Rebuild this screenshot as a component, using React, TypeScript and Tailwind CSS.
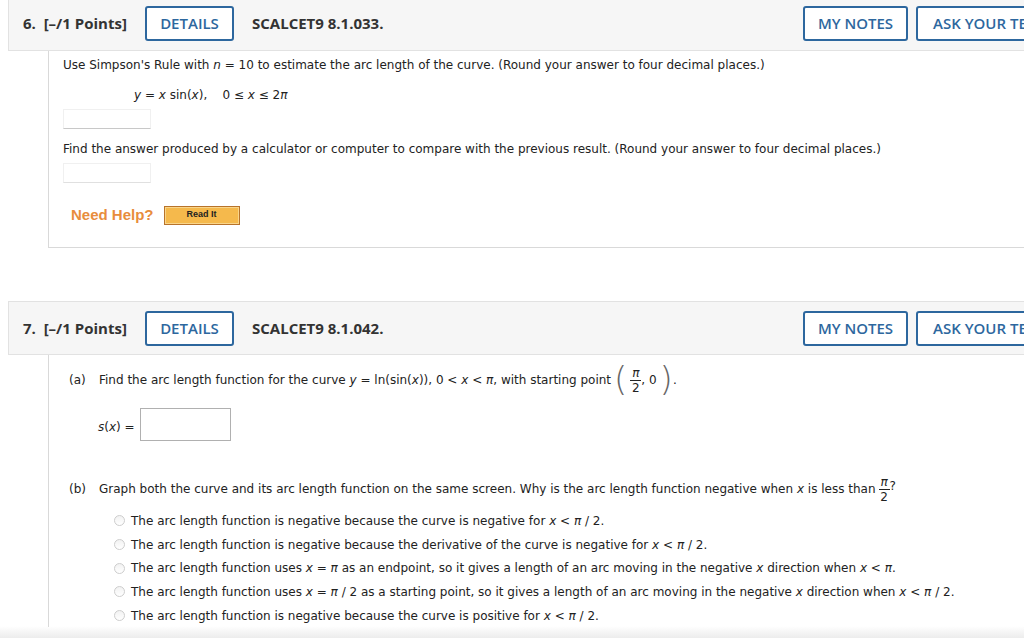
import React from "react";

const body = "font-['DejaVu_Sans','Verdana',sans-serif] text-[12px] text-[#222]";
const head = "font-['Open_Sans',sans-serif]";

const I = ({ children }: { children: React.ReactNode }) => <i className="italic">{children}</i>;

const Frac = ({ num, den }: { num: string; den: string }) => (
  <span className="inline-flex flex-col items-center align-middle mx-[3px] leading-none">
    <span className="italic text-[12px] pb-[1px]">{num}</span>
    <span className="border-t border-[#222] w-[11px]" />
    <span className="text-[12px] pt-[1px]">{den}</span>
  </span>
);

const Header = ({ num, code, className }: { num: string; code: string; className?: string }) => (
  <div className={`flex items-center h-[54px] bg-[#f6f6f6] border border-[#e2e2e2] border-r-0 pl-[14px] overflow-hidden ${head} ${className ?? ""}`}>
    <span className="text-[15px] font-bold text-[#333] w-[122px] whitespace-nowrap">
      {num}.&nbsp; [–/1 Points]
    </span>
    <button className="h-[35px] w-[89px] shrink-0 rounded-[3px] border-2 border-[#2d679e] text-[#2d679e] text-[15px] font-semibold bg-white">
      DETAILS
    </button>
    <span className="ml-[18px] text-[15px] font-bold text-[#333]">{code}</span>
    <div className="ml-auto flex gap-[8px] -mr-[42px]">
      <button className="h-[35px] w-[105px] shrink-0 rounded-[3px] border-2 border-[#2d679e] text-[#2d679e] text-[15px] font-semibold bg-white">
        MY NOTES
      </button>
      <button className="h-[35px] w-[150px] shrink-0 rounded-[3px] border-2 border-[#2d679e] text-[#2d679e] text-[15px] font-semibold bg-white text-left pl-[15px] whitespace-nowrap">
        ASK YOUR TE
      </button>
    </div>
  </div>
);

const Radio = ({ children }: { children: React.ReactNode }) => (
  <div className="flex items-center h-[23.7px]">
    <span className="w-[11px] h-[11px] rounded-full border border-[#cdcdcd] bg-gradient-to-b from-[#f2f2f2] to-white mr-[6px] shrink-0" />
    <span>{children}</span>
  </div>
);

export default function App() {
  return (
    <div className="relative w-[1024px] h-[638px] overflow-hidden bg-white">
      {/* Question 6 */}
      <div className="ml-[8px] -mt-[3px]">
        <Header num="6" code="SCALCET9 8.1.033." className="border-t-0" />
        <div className={`ml-[40px] border-l border-b border-[#d9d9d9] pl-[14px] pt-[6px] pb-[22px] ${body}`}>
          <p className="leading-[16px]">
            Use Simpson's Rule with <I>n</I> = 10 to estimate the arc length of the curve. (Round your answer to four decimal places.)
          </p>
          <p className="mt-[14px] ml-[71px] leading-[16px]">
            <I>y</I> = <I>x</I> sin(<I>x</I>),&nbsp;&nbsp;&nbsp; 0 ≤ <I>x</I> ≤ 2<I>π</I>
          </p>
          <div className="mt-[6px] w-[88px] h-[20px] border border-[#f0f0f0] border-b-[#c8c8c8]" />
          <p className="mt-[12px] leading-[16px]">
            Find the answer produced by a calculator or computer to compare with the previous result. (Round your answer to four decimal places.)
          </p>
          <div className="mt-[6px] w-[88px] h-[20px] border border-[#f0f0f0] border-b-[#e0e0e0]" />
          <div className="mt-[22px] ml-[8px] flex items-center h-[20px]">
            <span className="font-['Liberation_Sans',Arial,sans-serif] font-bold text-[15px] text-[#e88d3c]">Need Help?</span>
            <button className="ml-[10px] w-[76px] h-[19px] border border-[#b8732a] bg-[#f5b94c] font-['Liberation_Sans',Arial,sans-serif] font-bold text-[9px] text-[#222] shadow-[inset_0_0_0_1px_#f9d58a]">
              Read It
            </button>
          </div>
        </div>
      </div>

      {/* Question 7 */}
      <div className="ml-[8px] mt-[53px]">
        <Header num="7" code="SCALCET9 8.1.042." />
        <div className={`ml-[40px] border-l border-[#d9d9d9] pl-[20px] pt-[12px] ${body}`}>
          <div className="flex items-center h-[26px]">
            <span className="w-[30px]">(a)</span>
            <span>
              Find the arc length function for the curve <I>y</I> = ln(sin(<I>x</I>)), 0 &lt; <I>x</I> &lt; <I>π</I>, with starting point
            </span>
            <span className="ml-[3px] inline-flex items-center">
              <span className="text-[34px] font-thin text-[#666] leading-none -mt-[3px]">(</span>
              <Frac num="π" den="2" />
              <span className="-ml-[3px]">, 0</span>
              <span className="text-[34px] font-thin text-[#666] leading-none -mt-[3px] ml-[3px]">)</span>
              <span>.</span>
            </span>
          </div>
          <div className="flex items-center mt-[15px] ml-[29px]">
            <span className="mr-[5px] pt-[4px]">
              <I>s</I>(<I>x</I>) =
            </span>
            <div className="w-[91px] h-[33px] border border-[#b0b0b0]" />
          </div>
          <div className="flex items-center mt-[33px] h-[30px]">
            <span className="w-[30px]">(b)</span>
            <span>
              Graph both the curve and its arc length function on the same screen. Why is the arc length function negative when <I>x</I> is less than
            </span>
            <Frac num="π" den="2" />
            <span className="-ml-[3px] -mt-[6px]">?</span>
          </div>
          <div className="mt-[5px] ml-[45px]">
            <Radio>
              The arc length function is negative because the curve is negative for <I>x</I> &lt; <I>π</I> / 2.
            </Radio>
            <Radio>
              The arc length function is negative because the derivative of the curve is negative for <I>x</I> &lt; <I>π</I> / 2.
            </Radio>
            <Radio>
              The arc length function uses <I>x</I> = <I>π</I> as an endpoint, so it gives a length of an arc moving in the negative <I>x</I> direction when <I>x</I> &lt; <I>π</I>.
            </Radio>
            <Radio>
              The arc length function uses <I>x</I> = <I>π</I> / 2 as a starting point, so it gives a length of an arc moving in the negative <I>x</I> direction when <I>x</I> &lt; <I>π</I> / 2.
            </Radio>
            <Radio>
              The arc length function is negative because the curve is positive for <I>x</I> &lt; <I>π</I> / 2.
            </Radio>
          </div>
        </div>
      </div>

      {/* bottom fade */}
      <div className="absolute left-0 right-0 bottom-0 h-[12px] bg-gradient-to-b from-white/0 to-[#ececec]" />
    </div>
  );
}
